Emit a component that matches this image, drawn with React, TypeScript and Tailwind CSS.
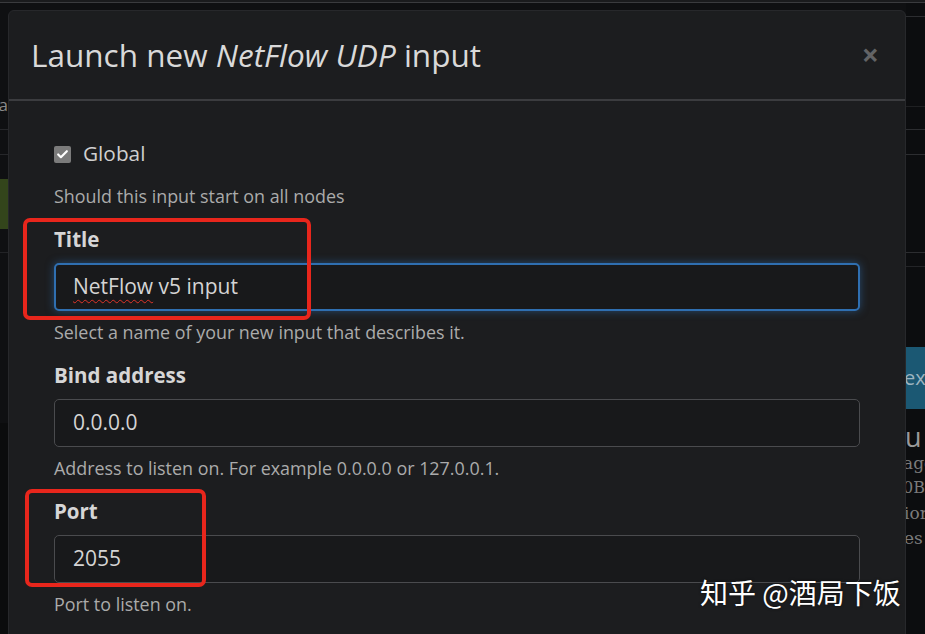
import { Check } from "lucide-react";

function FormGroup({
  label,
  value,
  help,
  focused,
  misspelt,
  mark,
}: {
  label: string;
  value: string;
  help: string;
  focused?: boolean;
  misspelt?: string;
  mark?: string;
}) {
  return (
    <div className="relative mt-[19px]">
      {mark && <div className={`pointer-events-none absolute rounded-[7px] border-[4px] border-[#e8261c] ${mark}`} />}
      <div className="h-[24px] text-[20.5px] font-bold leading-[24px] text-[#d6d6d6]">{label}</div>
      <div
        className={`mt-[12px] flex h-[48px] items-center rounded-[5px] bg-[#18191b] text-[21px] text-[#d4d4d4] ${
          focused
            ? "border-2 border-[#2f6fb1] pl-[17px] shadow-[0_0_9px_rgba(47,111,177,0.55)]"
            : "border border-[#4a4b4e] pl-[18px]"
        }`}
      >
        {misspelt && (
          <span className="underline decoration-[#e0342a] decoration-wavy decoration-1 underline-offset-[5px]">
            {misspelt}
          </span>
        )}
        {misspelt && <span>&nbsp;</span>}
        <span>{value}</span>
      </div>
      <div className="mt-[9px] h-[24px] text-[17.9px] leading-[24px] text-[#ababab]">{help}</div>
    </div>
  );
}

export default function App() {
  return (
    <div className="relative h-[634px] w-[925px] overflow-hidden bg-[#0f1012] font-['Open_Sans',sans-serif]">
      {/* page behind the modal */}
      <div className="flex h-full flex-col">
        <div className="h-[3px] border-b border-[#3a3b3e] bg-[#1a1b1d]" />
        <div className="flex flex-1">
          <div className="flex w-[8px] flex-col overflow-hidden">
            <div className="h-[90px]" />
            <div className="flex h-[36px] justify-end text-[17px] leading-[24px] text-[#8a8a8a]">a</div>
            <div className="h-[25px] border-t border-[#26272a]" />
            <div className="h-[25px] border-t border-[#26272a]" />
            <div className="h-[50px] bg-[#33451b]" />
            <div className="h-[24px] border-b border-[#222326]" />
            <div className="h-[170px]" />
            <div className="flex-1 bg-[#0b0c0d]" />
          </div>
          <div className="flex-1" />
          <div className="flex w-[19px] flex-col overflow-hidden bg-[#0c0d0f]">
            <div className="h-[14px] border-b border-[#2c2d30]" />
            <div className="h-[90px] border-b border-[#1f2022]" />
            <div className="h-[23px] border-b border-[#2c2d30]" />
            <div className="h-[25px] border-b border-[#2c2d30]" />
            <div className="h-[98px] border-b border-[#2c2d30]" />
            <div className="h-[14px] border-b border-[#232427]" />
            <div className="h-[80px]" />
            <div className="flex h-[62px] items-center bg-[#1b5873] text-[20px] text-[#9cb4c0]">
              <span className="-ml-[2px]">ex</span>
            </div>
            <div className="mt-[14px] flex flex-col font-['DejaVu_Serif',serif] text-[#7b7b7b]">
              <span className="-ml-[1px] h-[28px] font-['Open_Sans',sans-serif] text-[27px] leading-[28px] text-[#9a9a9a]">
                u
              </span>
              <span className="-ml-[3px] h-[24px] text-[17px] leading-[24px]">age</span>
              <span className="-ml-[3px] h-[26px] text-[16px] leading-[26px]">0B</span>
              <span className="-ml-[2px] h-[25px] text-[17px] leading-[25px]">ior</span>
              <span className="-ml-[2px] h-[25px] text-[17px] leading-[25px]">es</span>
            </div>
          </div>
        </div>
      </div>

      {/* modal */}
      <div className="absolute left-[8px] top-[10px] w-[898px] rounded-[6px] border border-[#27282b] bg-[#1c1d1f]">
        <div className="flex h-[90px] items-center justify-between border-b-2 border-[#3b3c3f] pl-[22px] pr-[26px]">
          <h4 className="text-[31.5px] leading-[36px] text-[#d9d9d9]">
            Launch new <em>NetFlow UDP</em> input
          </h4>
          <span className="text-[30px] font-bold leading-none text-[#626365]">×</span>
        </div>
        <div className="px-[45px] pb-[40px]">
          <div className="mt-[41px] flex h-[24px] items-center gap-[12px]">
            <span className="flex h-[17px] w-[17px] items-center justify-center rounded-[2px] bg-[#7b7b7b]">
              <Check className="h-[13px] w-[13px] text-white" strokeWidth={4} />
            </span>
            <span className="text-[20.8px] text-[#cfcfcf]">Global</span>
          </div>
          <div className="mt-[18px] h-[24px] text-[17.9px] leading-[24px] text-[#ababab]">
            Should this input start on all nodes
          </div>
          <FormGroup
            label="Title"
            misspelt="NetFlow"
            value="v5 input"
            help="Select a name of your new input that describes it."
            focused
            mark="-left-[31px] -top-[9px] h-[102px] w-[288px]"
          />
          <FormGroup
            label="Bind address"
            value="0.0.0.0"
            help="Address to listen on. For example 0.0.0.0 or 127.0.0.1."
          />
          <FormGroup
            label="Port"
            value="2055"
            help="Port to listen on."
            mark="-left-[29px] -top-[10px] h-[98px] w-[181px]"
          />
        </div>
      </div>

      {/* watermark */}
      <div className="absolute left-[700px] top-[574px] font-['Noto_Sans_CJK_SC',sans-serif] text-[28px] leading-[36px] text-white [text-shadow:0_0_3px_rgba(0,0,0,0.6)]">
        知乎 @酒局下饭
      </div>
    </div>
  );
}
